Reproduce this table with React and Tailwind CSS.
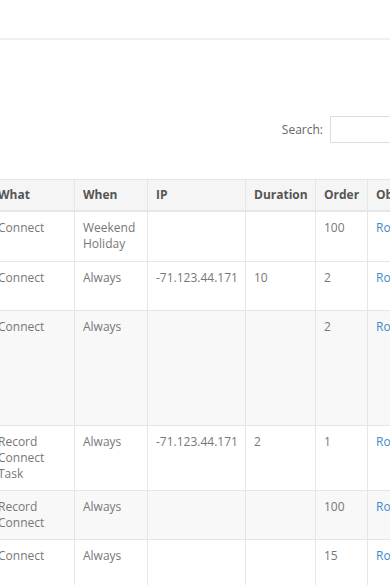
const rows = [
  { what: 'Connect', when: 'Weekend Holiday', ip: '', duration: '', order: '100', obj: 'Room Lobby', h: 'h-[50px]' },
  { what: 'Connect', when: 'Always', ip: '-71.123.44.171', duration: '10', order: '2', obj: 'Room Office', h: 'h-[49px]', },
  { what: 'Connect', when: 'Always', ip: '', duration: '', order: '2', obj: 'Room Main', h: 'h-[115px]', striped: true },
  { what: 'Record Connect Task', when: 'Always', ip: '-71.123.44.171', duration: '2', order: '1', obj: 'Room Office', h: 'h-[65px]' },
  { what: 'Record Connect', when: 'Always', ip: '', duration: '', order: '100', obj: 'Room Lobby', h: 'h-[49px]', striped: true },
  { what: 'Connect', when: 'Always', ip: '', duration: '', order: '15', obj: 'Room Main', h: 'h-[60px]' },
]

const cell = 'border border-[#e6e6e6] px-2 py-2 align-top'

export default function App() {
  return (
    <div
      className="w-[390px] h-[585px] overflow-hidden bg-white text-[12px] leading-[16px] text-[#777]"
      style={{ fontFamily: '"Open Sans", "Liberation Sans", sans-serif' }}
    >
      {/* Top bar */}
      <div className="h-[40px] border-b-2 border-[#f0f0f0]" />

      {/* Search */}
      <div className="h-[139px] flex items-start justify-end pt-[76px]">
        <label className="flex items-center gap-[7px] text-[#666] whitespace-nowrap -mr-[40px]">
          Search:
          <input className="w-[100px] h-[27px] border border-[#ddd] bg-white outline-none" />
        </label>
      </div>

      {/* Table */}
      <table className="table-fixed border-collapse -ml-[11px] w-[560px]">
        <colgroup>
          <col className="w-[85px]" />
          <col className="w-[73px]" />
          <col className="w-[98px]" />
          <col className="w-[70px]" />
          <col className="w-[52px]" />
          <col className="w-[182px]" />
        </colgroup>
        <thead>
          <tr className="h-[31px] bg-[#f5f5f5] text-[#555] font-bold text-left">
            <th className={cell + ' py-[7px] border-b-2'}>What</th>
            <th className={cell + ' py-[7px] border-b-2'}>When</th>
            <th className={cell + ' py-[7px] border-b-2'}>IP</th>
            <th className={cell + ' py-[7px] border-b-2'}>Duration</th>
            <th className={cell + ' py-[7px] border-b-2'}>Order</th>
            <th className={cell + ' py-[7px] border-b-2'}>Object</th>
          </tr>
        </thead>
        <tbody>
          {rows.map((r, i) => (
            <tr key={i} className={r.h + (r.striped ? ' bg-[#f8f8f8]' : ' bg-white')}>
              <td className={cell}>{r.what}</td>
              <td className={cell}>{r.when}</td>
              <td className={cell + ' whitespace-nowrap'}>{r.ip}</td>
              <td className={cell}>{r.duration}</td>
              <td className={cell}>{r.order}</td>
              <td className={cell}>
                <a href="#" className="text-[#428bca]">{r.obj}</a>
              </td>
            </tr>
          ))}
        </tbody>
      </table>
    </div>
  )
}
